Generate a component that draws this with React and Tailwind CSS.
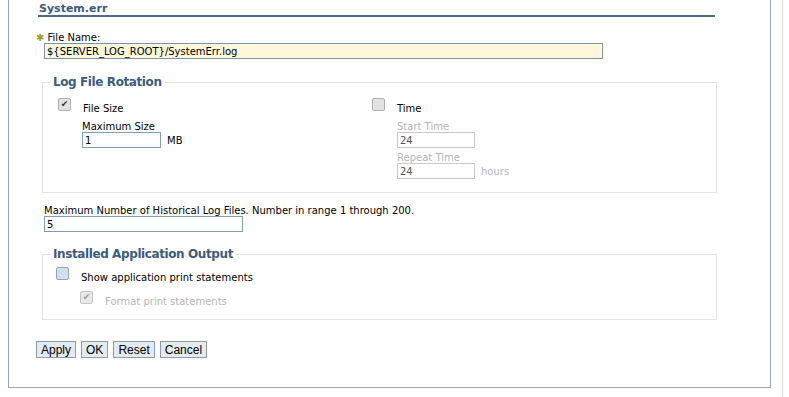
const font = { fontFamily: '"DejaVu Sans", Verdana, sans-serif' };

function Box({ checked, disabled, blue }) {
  return (
    <span
      className={
        "flex h-[13px] w-[13px] items-center justify-center rounded-[2px] border text-[9px] leading-none " +
        (blue
          ? "border-[#8ea4c4] bg-[#d5deeb]"
          : disabled
          ? "border-[#c4c4c4] bg-[#e8e8e8] text-[#9a9a9a]"
          : "border-[#b0b0b0] bg-[#e2e2e2] text-[#333]")
      }
    >
      {checked ? "✔" : ""}
    </span>
  );
}

function Field({ w, value, disabled }) {
  return (
    <div
      className={
        "flex h-[16px] items-center border px-[2px] text-[10px] " +
        (disabled ? "border-[#c8c8c8] text-[#555]" : "border-[#7f9db9] text-black")
      }
      style={{ width: w }}
    >
      {value}
    </div>
  );
}

function Btn({ children }) {
  return (
    <button
      className="h-[17px] border border-[#8c9cb0] bg-[#e4eaf1] px-[4px] text-[12px] leading-none text-black"
      style={{ fontFamily: '"Liberation Sans", Arial, sans-serif' }}
    >
      {children}
    </button>
  );
}

export default function App() {
  return (
    <div className="flex h-[397px] w-[789px] bg-white" style={font}>
      <div className="ml-[8px] h-[388px] w-[763px] border-b border-l border-r border-[#9aa4b0]">
        {/* heading */}
        <div className="ml-[29px] w-[677px] border-b-2 border-[#4c6a89] pt-[3px] text-[11px] font-bold leading-[12px] text-[#3c5b7d]">
          <span className="pl-[1px]">System.err</span>
        </div>

        {/* file name */}
        <div className="ml-[27px] mt-[15px] text-[10px] leading-[11px] text-black">
          <span className="text-[#a89a1c]">✱</span> File Name:
        </div>
        <div className="ml-[35px] flex h-[16px] w-[559px] items-center border border-[#7e93ab] bg-[#fff8dc] px-[2px] text-[10px]">
          {"${SERVER_LOG_ROOT}/SystemErr.log"}
        </div>

        {/* log file rotation */}
        <fieldset className="ml-[33px] mt-[16px] h-[118px] w-[675px] border border-[#e3e3e3]">
          <legend className="ml-[8px] px-[2px] text-[12px] font-bold leading-[14px] tracking-[-0.4px] text-[#3c5b7d]">
            Log File Rotation
          </legend>
          <div className="flex pt-[2px]">
            <div className="w-[329px] pl-[15px]">
              <div className="mt-[2px] flex items-center gap-[12px]">
                <Box checked />
                <span className="mt-[8px] text-[10px] text-black">File Size</span>
              </div>
              <div className="ml-[24px] mt-[5px] text-[10px] leading-[11px] text-black">Maximum Size</div>
              <div className="ml-[24px] flex items-center gap-[6px]">
                <Field w={79} value="1" />
                <span className="text-[10px]">MB</span>
              </div>
            </div>
            <div>
              <div className="mt-[2px] flex items-center gap-[12px]">
                <Box />
                <span className="mt-[8px] text-[10px] text-black">Time</span>
              </div>
              <div className="ml-[25px] mt-[5px] text-[10px] leading-[11px] text-[#b5b5b5]">Start Time</div>
              <div className="ml-[25px]">
                <Field w={78} value="24" disabled />
              </div>
              <div className="ml-[25px] mt-[4px] text-[10px] leading-[11px] text-[#b5b5b5]">Repeat Time</div>
              <div className="ml-[25px] flex items-center gap-[6px]">
                <Field w={78} value="24" disabled />
                <span className="text-[10px] text-[#b5b5b5]">hours</span>
              </div>
            </div>
          </div>
        </fieldset>

        {/* historical */}
        <div className="ml-[35px] mt-[12px] text-[10px] leading-[11px] text-black">
          Maximum Number of Historical Log Files. Number in range 1 through 200.
        </div>
        <div className="ml-[35px]">
          <Field w={199} value="5" />
        </div>

        {/* installed app output */}
        <fieldset className="ml-[33px] mt-[15px] h-[73px] w-[675px] border border-[#e3e3e3]">
          <legend className="ml-[8px] px-[2px] text-[12px] font-bold leading-[14px] tracking-[-0.4px] text-[#3c5b7d]">
            Installed Application Output
          </legend>
          <div className="ml-[13px] mt-[1px] flex items-center gap-[12px]">
            <Box blue />
            <span className="mt-[8px] text-[10px] text-black">Show application print statements</span>
          </div>
          <div className="ml-[37px] mt-[1px] flex items-center gap-[12px]">
            <Box checked disabled />
            <span className="mt-[8px] text-[10px] text-[#b5b5b5]">Format print statements</span>
          </div>
        </fieldset>

        {/* buttons */}
        <div className="ml-[27px] mt-[21px] flex gap-[5px]">
          <Btn>Apply</Btn>
          <Btn>OK</Btn>
          <Btn>Reset</Btn>
          <Btn>Cancel</Btn>
        </div>
      </div>
      <div className="ml-[11px] h-full border-l border-[#dcdcdc]" />
    </div>
  );
}
